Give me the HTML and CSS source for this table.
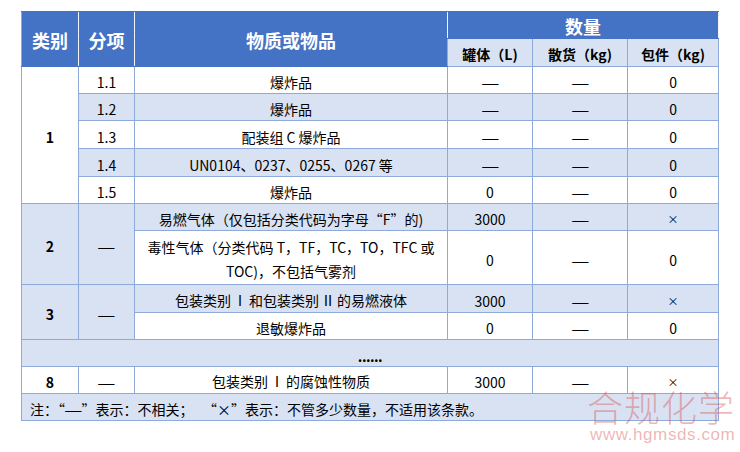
FILE: index.html
```html
<!DOCTYPE html>
<html lang="zh-CN">
<head>
<meta charset="utf-8">
<title>数量限制表</title>
<link rel="stylesheet" href="styles.css">
</head>
<body>
<div class="page">
  <table class="qty">
    <colgroup>
      <col class="c1"><col class="c2"><col class="c3"><col class="c4"><col class="c5"><col class="c6">
    </colgroup>
    <thead>
      <tr class="h27">
        <th class="hd" rowspan="2">类别</th>
        <th class="hd" rowspan="2">分项</th>
        <th class="hd" rowspan="2">物质或物品</th>
        <th class="hd" colspan="3">数量</th>
      </tr>
      <tr class="h28">
        <th class="sub">罐体（L)</th>
        <th class="sub">散货（kg)</th>
        <th class="sub">包件（kg)</th>
      </tr>
    </thead>
    <tbody>
      <tr class="h27">
        <td class="cat" rowspan="5">1</td>
        <td>1.1</td><td>爆炸品</td><td><span class="dash">—</span></td><td><span class="dash">—</span></td><td>0</td>
      </tr>
      <tr class="h27 alt">
        <td>1.2</td><td>爆炸品</td><td><span class="dash">—</span></td><td><span class="dash">—</span></td><td>0</td>
      </tr>
      <tr class="h28">
        <td>1.3</td><td>配装组 C 爆炸品</td><td><span class="dash">—</span></td><td><span class="dash">—</span></td><td>0</td>
      </tr>
      <tr class="h28 alt">
        <td>1.4</td><td>UN0104、0237、0255、0267 等</td><td><span class="dash">—</span></td><td><span class="dash">—</span></td><td>0</td>
      </tr>
      <tr class="h27">
        <td>1.5</td><td>爆炸品</td><td>0</td><td><span class="dash">—</span></td><td>0</td>
      </tr>
      <tr class="h27 alt">
        <td class="cat alt" rowspan="2">2</td>
        <td class="alt" rowspan="2"><span class="dash">—</span></td>
        <td>易燃气体（仅包括分类代码为字母“F”的)</td><td>3000</td><td><span class="dash">—</span></td><td class="x">×</td>
      </tr>
      <tr class="h54">
        <td class="two">毒性气体（分类代码 T，TF，TC，TO，TFC 或<br>TOC)，不包括气雾剂</td><td>0</td><td><span class="dash">—</span></td><td>0</td>
      </tr>
      <tr class="h28 alt">
        <td class="cat alt" rowspan="2">3</td>
        <td class="alt" rowspan="2"><span class="dash">—</span></td>
        <td>包装类别<span class="roman">Ⅰ</span>和包装类别<span class="roman">Ⅱ</span>的易燃液体</td><td>3000</td><td><span class="dash">—</span></td><td class="x">×</td>
      </tr>
      <tr class="h27">
        <td>退敏爆炸品</td><td>0</td><td><span class="dash">—</span></td><td>0</td>
      </tr>
      <tr class="h27 alt">
        <td class="dots" colspan="6">......</td>
      </tr>
      <tr class="h27">
        <td class="cat">8</td><td><span class="dash">—</span></td><td>包装类别<span class="roman">Ⅰ</span>的腐蚀性物质</td><td>3000</td><td><span class="dash">—</span></td><td class="x">×</td>
      </tr>
      <tr class="h27 alt">
        <td class="note" colspan="6">注：“<span class="dash">—</span>”表示：不相关；&nbsp;&nbsp;&nbsp;“×”表示：不管多少数量，不适用该条款。</td>
      </tr>
    </tbody>
  </table>
  <div class="mark">
    <div class="mark-cn">合规化学</div>
    <div class="mark-en">www.hgmsds.com</div>
  </div>
</div>
</body>
</html>
```
FILE: styles.css
```css
html, body {
  margin: 0;
  padding: 0;
  background: #ffffff;
}
body {
  font-family: "Noto Sans CJK SC", "Noto Sans", sans-serif;
  color: #000;
}
.page {
  position: relative;
  width: 740px;
  height: 452px;
  padding: 11px 0 0 21px;
  box-sizing: border-box;
  overflow: hidden;
}
.qty {
  border-collapse: collapse;
  table-layout: fixed;
  width: 697px;
  font-size: 14px;
}
.c1 { width: 57px; }
.c2 { width: 56px; }
.c3 { width: 313px; }
.c4 { width: 85px; }
.c5 { width: 95px; }
.c6 { width: 91px; }

.h27 { height: 27px; }
.h28 { height: 28px; }
.h54 { height: 54px; }

.qty th, .qty td {
  border: 1px solid #8eaadb;
  padding: 4px 2px 0;
  text-align: center;
  vertical-align: middle;
  line-height: 20px;
  white-space: nowrap;
  overflow: hidden;
}
.qty th {
  padding-top: 2px;
}
.qty th.hd {
  background: #4472c4;
  color: #fff;
  font-size: 18px;
  font-weight: 700;
  border-color: #4472c4;
  border-left: 1px dotted #e4eaf6;
  border-right: 1px dotted #e4eaf6;
}
.qty th.hd:first-child { border-left: 1px solid #8eaadb; }
.qty th.sub {
  background: #d9e2f3;
  color: #000;
  font-size: 14px;
  font-weight: 700;
}
.alt, .qty td.alt { background: #d9e2f3; }
.qty td.cat { font-weight: 700; }
.qty td.two {
  line-height: 24px;
  white-space: normal;
  padding-top: 3px;
}
.qty td.x { font-size: 11px; }
.dash {
  display: inline-block;
  transform: scaleX(1.45);
  margin: 0 2px;
}
.roman {
  font-family: "Liberation Serif", serif;
  margin: 0 2px;
}
.qty td.dots {
  font-weight: 700;
  vertical-align: bottom;
  padding-bottom: 2px;
  line-height: 16px;
  letter-spacing: -0.5px;
}
.qty td.note {
  text-align: left;
  padding-left: 8px;
}

.mark {
  position: absolute;
  left: 587px;
  top: 391px;
  width: 152px;
  color: rgba(214, 80, 80, 0.42);
  pointer-events: none;
}
.mark-cn {
  font-family: "Noto Sans CJK SC", sans-serif;
  font-weight: 300;
  font-size: 36px;
  line-height: 30px;
  letter-spacing: 1px;
  white-space: nowrap;
}
.mark-en {
  font-family: "Liberation Sans", sans-serif;
  font-size: 17px;
  line-height: 18px;
  letter-spacing: 0.6px;
  margin-top: 5px;
  padding-left: 3px;
  white-space: nowrap;
}
```
